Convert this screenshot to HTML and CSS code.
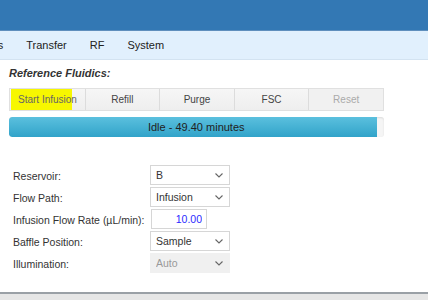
FILE: index.html
```html
<!DOCTYPE html>
<html lang="en">
<head>
    <meta charset="UTF-8">
    <meta name="viewport" content="width=device-width, initial-scale=1.0">
    <title>Reference Fluidics</title>
    <link rel="stylesheet" href="styles.css">
</head>
<body>
    <header class="topbar"></header>

    <nav class="menubar">
        <ul>
            <li><a href="#">Status</a></li>
            <li><a href="#">Transfer</a></li>
            <li><a href="#">RF</a></li>
            <li><a href="#">System</a></li>
        </ul>
    </nav>

    <div class="content">
        <h2 class="section-title">Reference Fluidics:</h2>

        <div class="btn-group">
            <button class="btn"><span class="marker">Start Infusion</span></button>
            <button class="btn">Refill</button>
            <button class="btn">Purge</button>
            <button class="btn">FSC</button>
            <button class="btn" disabled>Reset</button>
        </div>

        <div class="progress">
            <div class="progress-bar" style="width: 98%;">Idle - 49.40 minutes</div>
        </div>

        <div class="form-grid">
            <label>Reservoir:</label>
            <select class="field">
                <option>B</option>
            </select>

            <label>Flow Path:</label>
            <select class="field">
                <option>Infusion</option>
            </select>

            <label>Infusion Flow Rate (&micro;L/min):</label>
            <input class="field rate" type="text" value="10.00">

            <label>Baffle Position:</label>
            <select class="field">
                <option>Sample</option>
            </select>

            <label>Illumination:</label>
            <select class="field" disabled>
                <option>Auto</option>
            </select>
        </div>
    </div>

    <footer class="bottombar"></footer>
</body>
</html>
```

FILE: styles.css
```css
body {
    margin: 0;
    font-family: "Liberation Sans", Arial, sans-serif;
    font-size: 10.5px;
    color: #333;
    background-color: #fff;
    height: 300px;
    overflow: hidden;
    display: flex;
    flex-direction: column;
}

.topbar {
    height: 30px;
    flex-shrink: 0;
    background-color: #3378b4;
    border-bottom: 1px solid #5f8fbd;
}

.menubar {
    height: 28px;
    flex-shrink: 0;
    background-color: #e1f0fd;
    border-bottom: 1px solid #d3e3f1;
}

.menubar ul {
    list-style: none;
    margin: 0 0 0 -28px;
    padding: 0;
    display: flex;
    align-items: center;
    height: 100%;
}

.menubar li {
    margin-right: 23px;
}

.menubar a {
    text-decoration: none;
    color: #222;
    font-size: 11px;
}

.content {
    padding: 0 0 0 9px;
    flex: 1;
}

.section-title {
    margin: 7px 0 9px;
    font-size: 11px;
    font-weight: bold;
    font-style: italic;
    color: #333;
}

.btn-group {
    display: flex;
    width: 375px;
    height: 23px;
    border: 1px solid #e0e0e0;
    box-sizing: border-box;
    background-color: #f2f2f2;
}

.btn {
    flex: 1;
    border: none;
    border-left: 1px solid #dcdcdc;
    background: linear-gradient(#f6f6f6, #eeeeee);
    font-family: inherit;
    font-size: 10px;
    color: #444;
    padding: 0;
}

.btn:first-child {
    border-left: none;
    text-align: left;
    padding-left: 1px;
}

.btn:disabled {
    color: #aaa;
    background: #f1f1f1;
}

.marker {
    display: block;
    width: 54px;
    height: 21px;
    line-height: 21px;
    background-color: #f7f700;
    padding-left: 7px;
    white-space: nowrap;
    color: #666;
}

.progress {
    width: 375px;
    height: 20px;
    margin-top: 6px;
    border-radius: 3px;
    background-color: #f5f5f5;
    box-shadow: inset 0 1px 2px rgba(0, 0, 0, 0.1);
    overflow: hidden;
}

.progress-bar {
    height: 100%;
    box-sizing: border-box;
    padding-left: 7px;
    background: linear-gradient(#5bc0de, #31a3c9);
    color: #222;
    font-size: 11px;
    line-height: 20px;
    text-align: center;
    border-radius: 3px 0 0 3px;
}

.form-grid {
    display: grid;
    grid-template-columns: 137px auto;
    align-items: center;
    row-gap: 2px;
    margin-top: 28px;
    padding-left: 4px;
    justify-items: start;
}

.form-grid label {
    font-size: 10.5px;
    color: #333;
    padding-top: 2px;
    white-space: nowrap;
}

.field {
    width: 80px;
    height: 20px;
    box-sizing: border-box;
    border: 1px solid #d6d6d6;
    background-color: #fff;
    font-family: inherit;
    font-size: 10.5px;
    color: #333;
    padding: 0 5px;
    margin: 0;
    appearance: none;
    -webkit-appearance: none;
    border-radius: 0;
    background-image: url("data:image/svg+xml,%3Csvg xmlns='http://www.w3.org/2000/svg' width='8' height='5' viewBox='0 0 8 5'%3E%3Cpath d='M0.5 0.5 L4 4 L7.5 0.5' fill='none' stroke='%23666' stroke-width='1.1'/%3E%3C/svg%3E");
    background-repeat: no-repeat;
    background-position: right 6px center;
}

.field:disabled {
    background-color: #f0f0f0;
    border-color: #f0f0f0;
    color: #999;
    opacity: 1;
}

.rate {
    width: 56px;
    margin-left: 1px;
    text-align: right;
    color: #2a2aff;
    background-image: none;
    padding: 0 4px;
}

.bottombar {
    height: 6px;
    flex-shrink: 0;
    border-top: 2px solid #9aa0a6;
    background-color: #e6e6e6;
}
```
